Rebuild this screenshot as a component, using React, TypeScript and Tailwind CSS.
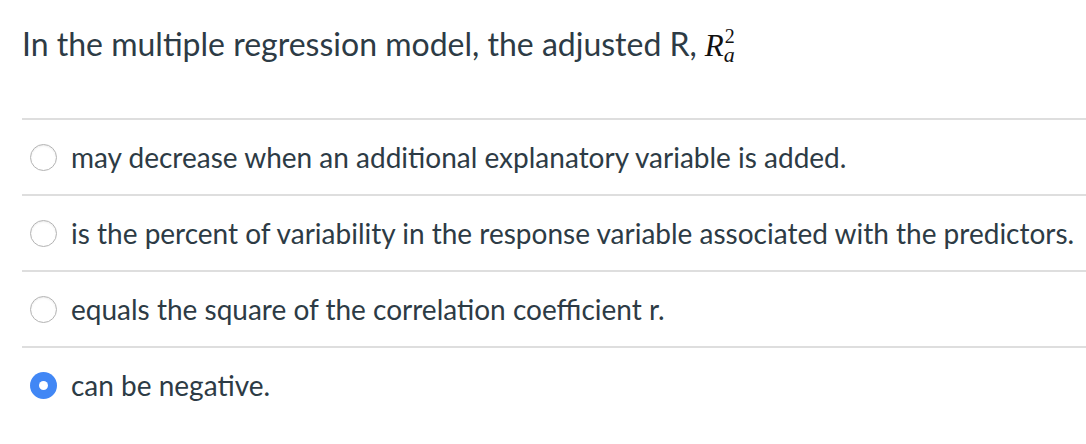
import React from 'react';

const options = [
  { text: 'may decrease when an additional explanatory variable is added.', selected: false },
  { text: 'is the percent of variability in the response variable associated with the predictors.', selected: false },
  { text: 'equals the square of the correlation coefficient r.', selected: false },
  { text: 'can be negative.', selected: true },
];

const Radio: React.FC<{ selected: boolean }> = ({ selected }) =>
  selected ? (
    <span className="flex h-[27px] w-[27px] shrink-0 items-center justify-center rounded-full bg-[#4187f5]">
      <span className="h-[9px] w-[9px] rounded-full bg-white" />
    </span>
  ) : (
    <span className="h-[27px] w-[27px] shrink-0 rounded-full border border-[#b3b3b3] bg-white shadow-[inset_0_1px_2px_rgba(0,0,0,0.08)]" />
  );

export default function App() {
  return (
    <div className="h-[444px] w-[1086px] bg-white pl-[22px] pt-[24px] text-[#2d3b45]" style={{ fontFamily: 'Lato, "Open Sans", sans-serif' }}>
      <h1 className="flex items-baseline text-[32px] font-normal leading-[40px]">
        <span>In the multiple regression model, the adjusted R,</span>
        {/* R_a^2 */}
        <span className="ml-[8px] inline-flex items-baseline text-[#111]" style={{ fontFamily: '"Liberation Serif", serif' }}>
          <span className="italic text-[31px]">R</span>
          <span className="relative inline-block w-[14px]">
            <span className="absolute left-[1px] top-[-28px] text-[20px] leading-[17px]">2</span>
            <span className="absolute left-[0px] top-[-9px] text-[22px] italic leading-[16px]">a</span>
          </span>
        </span>
      </h1>
      <div className="mt-[52px]">
        {options.map((o, i) => (
          <div key={i} className="border-t-2 border-[#dedede]">
            <div className="flex h-[74px] items-center gap-[14px] pl-[8px]">
              <Radio selected={o.selected} />
              <span className="text-[28px] leading-none">{o.text}</span>
            </div>
          </div>
        ))}
      </div>
    </div>
  );
}
